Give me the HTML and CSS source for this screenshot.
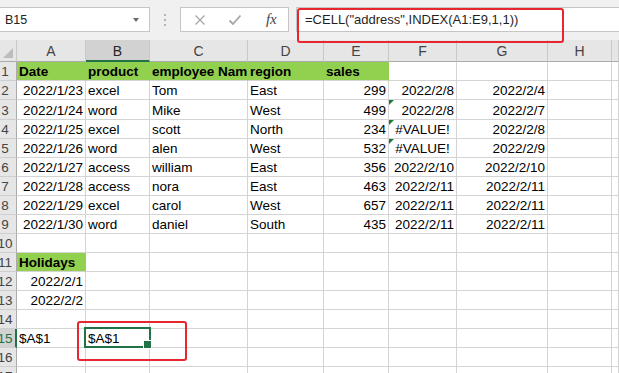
FILE: index.html
```html
<!DOCTYPE html>
<html>
<head>
<meta charset="utf-8">
<link rel="stylesheet" href="styles.css">
</head>
<body>
<div class="toolbar">
  <div class="namebox"><span>B15</span><span class="caret"></span></div>
  <div class="dots"><i></i><i></i><i></i></div>
  <div class="btns">
    <div class="btn"><svg width="12" height="12" viewBox="0 0 12 12"><path d="M1.5 1.5 L10.5 10.5 M10.5 1.5 L1.5 10.5" stroke="#a6a6a6" stroke-width="1.3" fill="none"/></svg></div>
    <div class="btn"><svg width="14" height="12" viewBox="0 0 14 12"><path d="M1.5 6.5 L5 10 L12.5 1.5" stroke="#a6a6a6" stroke-width="1.8" fill="none"/></svg></div>
    <div class="btn fx">fx</div>
  </div>
  <div class="formula">=CELL("address",INDEX(A1:E9,1,1))</div>
</div>

<div class="sheet">
  <div class="c h corner"><svg width="12" height="12" viewBox="0 0 12 12"><polygon points="11,1 11,11 1,11" fill="#bdbdbd"/></svg></div>
  <div class="c h">A</div><div class="c h selcol">B</div><div class="c h">C</div><div class="c h">D</div><div class="c h">E</div><div class="c h">F</div><div class="c h">G</div><div class="c h">H</div><div class="c h"></div>

  <div class="c rh"><span>1</span></div><div class="c g b">Date</div><div class="c g b">product</div><div class="c g b">employee Name</div><div class="c g b">region</div><div class="c g b">sales</div><div class="c"></div><div class="c"></div><div class="c"></div><div class="c"></div>

  <div class="c rh"><span>2</span></div><div class="c r">2022/1/23</div><div class="c">excel</div><div class="c">Tom</div><div class="c">East</div><div class="c r">299</div><div class="c r">2022/2/8</div><div class="c r">2022/2/4</div><div class="c"></div><div class="c"></div>

  <div class="c rh"><span>3</span></div><div class="c r">2022/1/24</div><div class="c">word</div><div class="c">Mike</div><div class="c">West</div><div class="c r">499</div><div class="c r err">2022/2/8</div><div class="c r">2022/2/7</div><div class="c"></div><div class="c"></div>

  <div class="c rh"><span>4</span></div><div class="c r">2022/1/25</div><div class="c">excel</div><div class="c">scott</div><div class="c">North</div><div class="c r">234</div><div class="c ctr err">#VALUE!</div><div class="c r">2022/2/8</div><div class="c"></div><div class="c"></div>

  <div class="c rh"><span>5</span></div><div class="c r">2022/1/26</div><div class="c">word</div><div class="c">alen</div><div class="c">West</div><div class="c r">532</div><div class="c ctr err">#VALUE!</div><div class="c r">2022/2/9</div><div class="c"></div><div class="c"></div>

  <div class="c rh"><span>6</span></div><div class="c r">2022/1/27</div><div class="c">access</div><div class="c">william</div><div class="c">East</div><div class="c r">356</div><div class="c r">2022/2/10</div><div class="c r">2022/2/10</div><div class="c"></div><div class="c"></div>

  <div class="c rh"><span>7</span></div><div class="c r">2022/1/28</div><div class="c">access</div><div class="c">nora</div><div class="c">East</div><div class="c r">463</div><div class="c r">2022/2/11</div><div class="c r">2022/2/11</div><div class="c"></div><div class="c"></div>

  <div class="c rh"><span>8</span></div><div class="c r">2022/1/29</div><div class="c">excel</div><div class="c">carol</div><div class="c">West</div><div class="c r">657</div><div class="c r">2022/2/11</div><div class="c r">2022/2/11</div><div class="c"></div><div class="c"></div>

  <div class="c rh"><span>9</span></div><div class="c r">2022/1/30</div><div class="c">word</div><div class="c">daniel</div><div class="c">South</div><div class="c r">435</div><div class="c r">2022/2/11</div><div class="c r">2022/2/11</div><div class="c"></div><div class="c"></div>

  <div class="c rh"><span>10</span></div><div class="c"></div><div class="c"></div><div class="c"></div><div class="c"></div><div class="c"></div><div class="c"></div><div class="c"></div><div class="c"></div><div class="c"></div>

  <div class="c rh"><span>11</span></div><div class="c g b">Holidays</div><div class="c"></div><div class="c"></div><div class="c"></div><div class="c"></div><div class="c"></div><div class="c"></div><div class="c"></div><div class="c"></div>

  <div class="c rh"><span>12</span></div><div class="c r">2022/2/1</div><div class="c"></div><div class="c"></div><div class="c"></div><div class="c"></div><div class="c"></div><div class="c"></div><div class="c"></div><div class="c"></div>

  <div class="c rh"><span>13</span></div><div class="c r">2022/2/2</div><div class="c"></div><div class="c"></div><div class="c"></div><div class="c"></div><div class="c"></div><div class="c"></div><div class="c"></div><div class="c"></div>

  <div class="c rh"><span>14</span></div><div class="c"></div><div class="c"></div><div class="c"></div><div class="c"></div><div class="c"></div><div class="c"></div><div class="c"></div><div class="c"></div><div class="c"></div>

  <div class="c rh selrow"><span>15</span></div><div class="c">$A$1</div><div class="c sel">$A$1</div><div class="c"></div><div class="c"></div><div class="c"></div><div class="c"></div><div class="c"></div><div class="c"></div><div class="c"></div>

  <div class="c rh"><span>16</span></div><div class="c"></div><div class="c"></div><div class="c"></div><div class="c"></div><div class="c"></div><div class="c"></div><div class="c"></div><div class="c"></div><div class="c"></div>

  <div class="c rh"><span>17</span></div><div class="c"></div><div class="c"></div><div class="c"></div><div class="c"></div><div class="c"></div><div class="c"></div><div class="c"></div><div class="c"></div><div class="c"></div>
</div>

<div class="mark m1"></div>
<div class="mark m2"></div>
</body>
</html>
```

FILE: styles.css
```css
* { box-sizing: border-box; margin: 0; padding: 0; }
html, body { width: 619px; height: 373px; overflow: hidden; }
body {
  position: relative;
  background: #fff;
  font-family: "Liberation Sans", Arial, sans-serif;
  color: #000;
}

/* ---------- formula toolbar ---------- */
.toolbar {
  height: 40px;
  background: #f0f0f0;
  display: flex;
  align-items: flex-start;
  padding-top: 7px;
}
.namebox {
  width: 151px;
  height: 25px;
  margin-left: -1px;
  background: #fff;
  border: 1px solid #c6c6c6;
  display: flex;
  align-items: center;
  justify-content: space-between;
  padding: 0 10px 0 5px;
  font-size: 12.5px;
  color: #222;
}
.caret {
  width: 0;
  height: 0;
  border-left: 3.5px solid transparent;
  border-right: 3.5px solid transparent;
  border-top: 4px solid #6a6a6a;
}
.dots {
  width: 30px;
  height: 25px;
  display: flex;
  flex-direction: column;
  align-items: center;
  justify-content: center;
  gap: 3px;
}
.dots i { display: block; width: 2px; height: 2px; background: #b4b4b4; }
.btns {
  width: 109px;
  height: 25px;
  background: #fff;
  border: 1px solid #c6c6c6;
  display: flex;
  padding-left: 1px;
}
.btn {
  width: 36px;
  display: flex;
  align-items: center;
  justify-content: center;
}
.fx {
  font-family: "Liberation Serif", serif;
  font-style: italic;
  font-size: 15px;
  color: #444;
  padding-left: 2px;
}
.formula {
  flex: 1;
  margin-left: 7px;
  margin-right: -2px;
  height: 25px;
  background: #fff;
  border: 1px solid #c6c6c6;
  font-size: 13px;
  line-height: 23px;
  padding-left: 8px;
  color: #1f1f1f;
  white-space: nowrap;
}

/* ---------- sheet grid ---------- */
.sheet {
  display: grid;
  grid-template-columns: 17px 69px 64px 98px 76px 65px 68px 91px 64px 1fr;
  grid-template-rows: 22px 19px 19px 20px repeat(14, 19px);
  font-size: 13.5px;
}
.c {
  border-right: 1px solid #d4d4d4;
  border-bottom: 1px solid #d4d4d4;
  display: flex;
  align-items: flex-end;
  padding: 0 2px;
  line-height: 17px;
  white-space: nowrap;
  overflow: hidden;
  position: relative;
}
.r { justify-content: flex-end; }
.ctr { justify-content: center; }
.b { font-weight: bold; }
.g { background: #92d050; border-right-color: #92d050; }

.h {
  background: #e6e6e6;
  border-right-color: #c9c9c9;
  border-bottom-color: #ababab;
  justify-content: center;
  align-items: center;
  padding-top: 2px;
  color: #444;
  font-size: 14px;
}
.corner { justify-content: flex-end; align-items: flex-end; padding: 0 2px 2px 0; }
.selcol {
  background: #d2d2d2;
  border-bottom: 2px solid #217346;
  color: #262626;
}
.rh {
  background: #e6e6e6;
  border-right-color: #ababab;
  border-bottom-color: #cfcfcf;
  padding: 0;
  color: #444;
}
.rh span { display: block; flex-shrink: 0; width: 22px; margin-left: -6px; text-align: center; }
.selrow {
  background: #d2d2d2;
  border-right: 2px solid #217346;
  color: #217346;
}

.err::before {
  content: "";
  position: absolute;
  left: 0;
  top: 0;
  border-top: 5px solid #1f7a3a;
  border-right: 5px solid transparent;
}

.sel { overflow: visible; }
.sel::after {
  content: "";
  position: absolute;
  left: -2px;
  top: -2px;
  right: -2px;
  bottom: -1px;
  border: 2px solid #217346;
  z-index: 2;
}
.sel::before {
  content: "";
  position: absolute;
  right: -3px;
  bottom: -2px;
  width: 7px;
  height: 7px;
  background: #217346;
  border: 1px solid #fff;
  z-index: 3;
}

/* ---------- annotation boxes ---------- */
.mark {
  position: absolute;
  border: 2.5px solid #e8262d;
  border-radius: 3px;
  z-index: 5;
}
.m1 { left: 297px; top: 8px; width: 267px; height: 35px; }
.m2 { left: 77px; top: 321px; width: 110px; height: 40px; }
```
